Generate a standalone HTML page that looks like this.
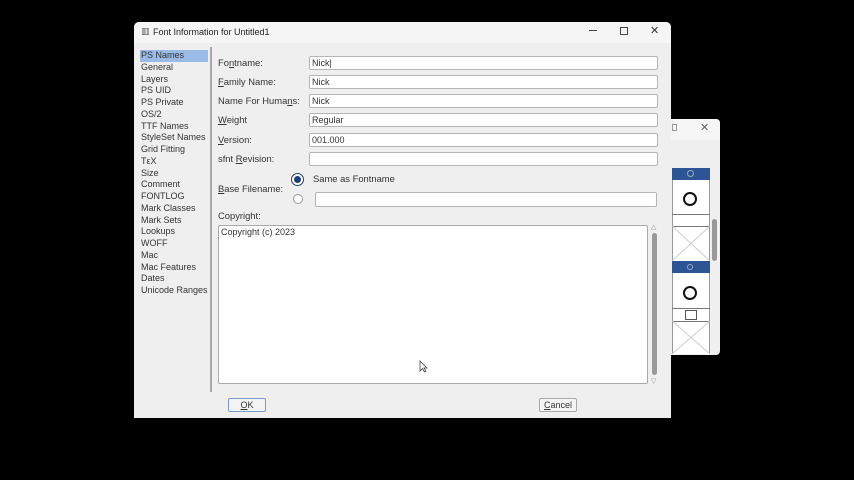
<!DOCTYPE html>
<html><head><meta charset="utf-8"><style>
*{margin:0;padding:0;box-sizing:border-box}
body{width:854px;height:480px;background:#000;position:relative;overflow:hidden;font-family:"Liberation Sans","DejaVu Sans",sans-serif;font-size:9px;color:#333}
.a{position:absolute}
.f{position:absolute;background:#fff;border:1px solid #b5b5b5;border-radius:2px;height:14px;padding-left:2px;line-height:12px;font-size:9px}
.l{position:absolute;left:218px;font-size:9.4px}
.s div{height:11.75px;line-height:11.75px;padding-left:1px;font-size:9px}
</style></head><body>
<div class="a" style="left:660px;top:119px;width:60px;height:236px;background:#f0f0f0;border-radius:4px"></div>
<div class="a" style="left:660px;top:119px;width:60px;height:21px;background:#f6f6f6;border-radius:4px 4px 0 0"></div>
<div class="a" style="left:700px;top:121px;font-size:11px;color:#666">✕</div>
<div class="a" style="left:672px;top:124px;width:5px;height:7px;border:1px solid #999"></div>
<div class="a" style="left:672px;top:168px;width:38px;height:186px;background:#fff;border-left:1px solid #999;border-right:1px solid #999"></div>
<div class="a" style="left:672px;top:168px;width:38px;height:12px;background:#2d5596"></div>
<div class="a" style="left:687px;top:170px;width:7px;height:7px;border:1px solid #9ab;border-radius:50%"></div>
<div class="a" style="left:683px;top:192px;width:14px;height:14px;border:2px solid #111;border-radius:50%"></div>
<div class="a" style="left:672px;top:214px;width:38px;height:1px;background:#777"></div>
<div class="a" style="left:672px;top:226px;width:38px;height:1px;background:#777"></div>
<svg class="a" style="left:672px;top:226px" width="38" height="35"><path d="M0 0L38 35M38 0L0 35" stroke="#ccc"/></svg>
<div class="a" style="left:672px;top:261px;width:38px;height:12px;background:#2d5596"></div>
<div class="a" style="left:687px;top:264px;width:6px;height:6px;border:1px solid #9ab;border-radius:50%"></div>
<div class="a" style="left:683px;top:286px;width:14px;height:14px;border:2px solid #111;border-radius:50%"></div>
<div class="a" style="left:672px;top:308px;width:38px;height:1px;background:#777"></div>
<div class="a" style="left:685px;top:310px;width:12px;height:10px;border:1px solid #555"></div>
<div class="a" style="left:672px;top:321px;width:38px;height:1px;background:#777"></div>
<svg class="a" style="left:672px;top:321px" width="38" height="33"><path d="M0 0L38 33M38 0L0 33" stroke="#ccc"/></svg>
<div class="a" style="left:712px;top:219px;width:5px;height:42px;background:#999;border-radius:3px"></div>
<div class="a" style="left:134px;top:22px;width:537px;height:396px;background:#efefef;border-radius:5px 5px 0 0"></div>
<div class="a" style="left:134px;top:22px;width:537px;height:21px;background:#f5f5f5;border-radius:5px 5px 0 0"></div>
<div class="a" style="left:141px;top:26px;font-size:9px;color:#555">▥</div>
<div class="a" style="left:153px;top:27px;font-size:9px;color:#222">Font Information for Untitled1</div>
<div class="a" style="left:589px;top:30px;width:8px;height:1px;background:#444"></div>
<div class="a" style="left:620px;top:27px;width:8px;height:8px;border:1px solid #444"></div>
<div class="a" style="left:650px;top:24px;font-size:11px;color:#333">✕</div>
<div class="a s" style="left:140px;top:50px;width:68px">
<div style="background:#99bbe6">PS Names</div><div>General</div><div>Layers</div><div>PS UID</div><div>PS Private</div><div>OS/2</div><div>TTF Names</div><div>StyleSet Names</div><div>Grid Fitting</div><div>TεX</div><div>Size</div><div>Comment</div><div>FONTLOG</div><div>Mark Classes</div><div>Mark Sets</div><div>Lookups</div><div>WOFF</div><div>Mac</div><div>Mac Features</div><div>Dates</div><div>Unicode Ranges</div>
</div>
<div class="a" style="left:210px;top:47px;width:2px;height:345px;background:#a8a8a8"></div>
<div class="l" style="top:57px">Fo<u>n</u>tname:</div>
<div class="l" style="top:76px"><u>F</u>amily Name:</div>
<div class="l" style="top:95px">Name For Huma<u>n</u>s:</div>
<div class="l" style="top:114px"><u>W</u>eight</div>
<div class="l" style="top:134px"><u>V</u>ersion:</div>
<div class="l" style="top:153px">sfnt <u>R</u>evision:</div>
<div class="l" style="top:183px"><u>B</u>ase Filename:</div>
<div class="l" style="top:210px">Copyright:</div>
<div class="f" style="left:309px;top:56px;width:349px">Nick|</div>
<div class="f" style="left:309px;top:75px;width:349px">Nick</div>
<div class="f" style="left:309px;top:94px;width:349px">Nick</div>
<div class="f" style="left:309px;top:113px;width:349px">Regular</div>
<div class="f" style="left:309px;top:133px;width:349px">001.000</div>
<div class="f" style="left:309px;top:152px;width:349px"></div>
<div class="a" style="left:292px;top:174px;width:11px;height:11px;border-radius:50%;background:#1c3f78;border:2px solid #fff;box-shadow:0 0 0 1px #1c3f78"></div>
<div class="a" style="left:313px;top:173px;font-size:9.4px">Same as Fontname</div>
<div class="a" style="left:293px;top:194px;width:10px;height:10px;border-radius:50%;background:#fff;border:1px solid #999"></div>
<div class="f" style="left:315px;top:192px;width:342px;height:15px"></div>
<div class="a" style="left:218px;top:225px;width:430px;height:159px;background:#fff;border:1px solid #aaa;border-radius:2px"></div>
<div class="a" style="left:221px;top:227px;font-size:9px">Copyright (c) 2023</div>
<div class="a" style="left:651px;top:223px;font-size:7px;color:#999">△</div>
<div class="a" style="left:651px;top:377px;font-size:7px;color:#999">▽</div>
<div class="a" style="left:652px;top:233px;width:5px;height:142px;background:#999;border-radius:3px"></div>
<svg class="a" style="left:419px;top:360px" width="9" height="13"><path d="M1 1L1 11L3.5 8.5L5.5 12L7 11.3L5 8L8 8Z" fill="#fff" stroke="#444" stroke-width=".8"/></svg>
<div class="a" style="left:228px;top:398px;width:38px;height:14px;border:1px solid #7a9cc8;border-radius:2px;background:#f4f4f4;text-align:center;line-height:12px;font-size:9px"><u>O</u>K</div>
<div class="a" style="left:539px;top:398px;width:38px;height:14px;border:1px solid #aaa;border-radius:2px;background:#f4f4f4;text-align:center;line-height:12px;font-size:9px"><u>C</u>ancel</div>
</body></html>
